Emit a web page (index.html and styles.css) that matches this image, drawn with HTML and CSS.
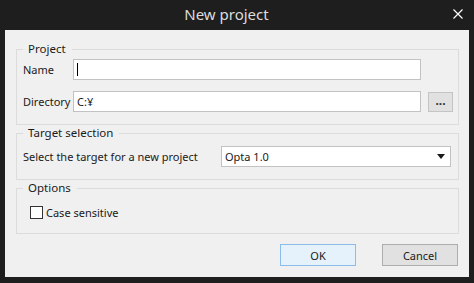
FILE: index.html
```html
<!DOCTYPE html>
<html lang="en">
<head>
    <meta charset="UTF-8">
    <title>New project</title>
    <link rel="stylesheet" href="styles.css">
</head>
<body>

    <div class="window">
        <div class="titlebar">
            <span class="title">New project</span>
            <svg class="close" width="10" height="10" viewBox="0 0 10 10">
                <path d="M0.5 0.5 L9.5 9.5 M9.5 0.5 L0.5 9.5" stroke="#ffffff" stroke-width="1.2" fill="none"/>
            </svg>
        </div>

        <div class="client">
            <fieldset class="group project">
                <legend>Project</legend>
                <div class="row name-row">
                    <label class="field-label">Name</label>
                    <div class="textbox"><span class="caret"></span></div>
                </div>
                <div class="row dir-row">
                    <label class="field-label">Directory</label>
                    <div class="textbox">C:¥</div>
                    <button class="browse">...</button>
                </div>
            </fieldset>

            <fieldset class="group target">
                <legend>Target selection</legend>
                <div class="row target-row">
                    <label class="target-label">Select the target for a new project</label>
                    <div class="combo">
                        <span>Opta 1.0</span>
                        <span class="arrow"></span>
                    </div>
                </div>
            </fieldset>

            <fieldset class="group options">
                <legend>Options</legend>
                <div class="check-row">
                    <span class="checkbox"></span>
                    <span>Case sensitive</span>
                </div>
            </fieldset>

            <div class="actions">
                <button class="btn btn-default">OK</button>
                <button class="btn">Cancel</button>
            </div>
        </div>
    </div>

</body>
</html>
```

FILE: styles.css
```css
body {
    margin: 0;
    background: #1e1e1e;
    font-family: "Noto Sans", "Open Sans", sans-serif;
    font-size: 11px;
    color: #1a1a1a;
}
.window {
    width: 474px;
    height: 283px;
    background: #1e1e1e;
    padding: 0 5px 6px;
    box-sizing: border-box;
    display: flex;
    flex-direction: column;
}
.titlebar {
    height: 30px;
    display: flex;
    align-items: center;
    margin: 0 -5px;
}
.title {
    flex: 1;
    text-align: center;
    color: #dcdcdc;
    font-size: 15px;
    padding-bottom: 2px;
}
.close {
    margin-right: 11px;
    margin-bottom: 3px;
}
.client {
    flex: 1;
    background: #f0f0f0;
    padding: 11px 10px 0 11px;
}
.group {
    margin: 0;
    border: 1px solid #dcdcdc;
    padding: 0 5px 12px 6px;
    min-width: 0;
}
.group legend {
    padding: 0 6px 0 5px;
    line-height: 16px;
    font-size: 11.5px;
}
.row {
    display: flex;
    align-items: center;
    height: 21px;
}
.name-row {
    margin-top: 2px;
    padding-right: 32px;
}
.dir-row {
    margin-top: 11px;
    gap: 7px;
}
.field-label {
    width: 50px;
    flex: none;
}
.dir-row .field-label {
    width: 43px;
}
.textbox {
    flex: 1;
    height: 21px;
    box-sizing: border-box;
    background: #fff;
    border: 1px solid #c2c2c2;
    padding: 0 3px;
    line-height: 19px;
    display: flex;
    align-items: center;
}
.caret {
    width: 1px;
    height: 13px;
    background: #000;
}
.browse {
    width: 25px;
    height: 20px;
    margin-top: 1px;
    background: #e1e1e1;
    border: 1px solid #c4c4c4;
    padding: 0 0 3px;
    font-family: inherit;
    font-size: 12px;
    font-weight: bold;
    line-height: 10px;
    color: #333;
}
.target .row {
    margin-top: 5px;
    padding-right: 2px;
}
.target-label {
    width: 198px;
}
.combo {
    flex: 1;
    height: 21px;
    box-sizing: border-box;
    background: #fff;
    border: 1px solid #c2c2c2;
    padding: 0 5px 0 3px;
    display: flex;
    align-items: center;
    justify-content: space-between;
}
.arrow {
    width: 0;
    height: 0;
    border-left: 4px solid transparent;
    border-right: 4px solid transparent;
    border-top: 5px solid #1a1a1a;
}
.options {
    padding-bottom: 14px;
}
.check-row {
    margin-top: 10px;
    display: flex;
    align-items: center;
    gap: 3px;
    height: 13px;
    padding-left: 7px;
}
.checkbox {
    width: 13px;
    height: 13px;
    box-sizing: border-box;
    background: #fff;
    border: 1px solid #333;
}
.actions {
    display: flex;
    justify-content: flex-end;
    gap: 26px;
    margin-top: 10px;
    padding-right: 1px;
}
.btn {
    width: 76px;
    height: 22px;
    background: #e1e1e1;
    border: 1px solid #adadad;
    font-family: inherit;
    font-size: 11px;
    color: #1a1a1a;
    padding: 0;
}
.btn-default {
    background: #e5f1fb;
    border-color: #8cbcec;
}
```
